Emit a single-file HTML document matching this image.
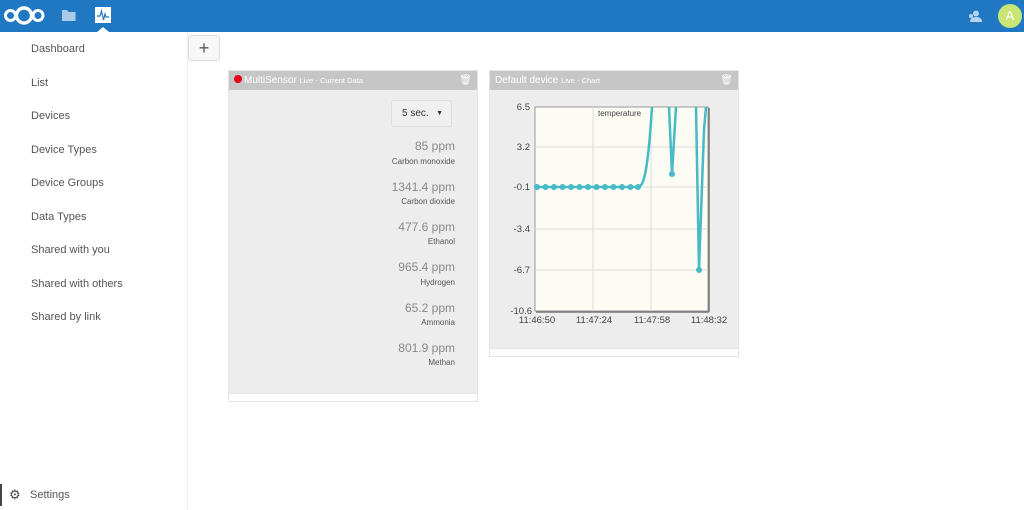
<!DOCTYPE html>
<html><head><style>
*{margin:0;padding:0;box-sizing:border-box}
body{width:1024px;height:510px;overflow:hidden;background:#fff;font-family:"Liberation Sans",sans-serif;position:relative}
#hdr{position:absolute;left:0;top:0;width:1024px;height:32px;background:#1f78c1}
#side{position:absolute;left:0;top:32px;width:188px;height:478px;border-right:1px solid #eee}
.nav{position:absolute;left:31px;font-size:11px;color:#555}
.card{position:absolute;background:#ededed;border:1px solid #e4e4e4}
.ch{height:19px;background:#c6c6c6;color:#fff;font-size:10px;padding:3px 5px;line-height:13px}
.ch small{font-size:7.5px}
.val{position:absolute;right:22px;text-align:right;color:#888;font-size:12px}
.lbl{position:absolute;right:22px;text-align:right;color:#555;font-size:8px}
.foot{position:absolute;left:0;right:0;bottom:0;height:8px;background:#fff;border-top:1px solid #e6e6e6}
</style></head><body>
<div id="hdr">
<svg width="120" height="32" style="position:absolute;left:0;top:0">
<circle cx="10.5" cy="15.5" r="5" fill="none" stroke="#fff" stroke-width="3"/>
<circle cx="24" cy="15.5" r="7.5" fill="none" stroke="#fff" stroke-width="3.4"/>
<circle cx="38" cy="15.5" r="5" fill="none" stroke="#fff" stroke-width="3"/>
<path d="M62 10h5l1.5 2h7v9h-13.5z" fill="#a9cbeb"/>
<rect x="95" y="7" width="16" height="16" fill="#fff"/>
<path d="M97 16h3l1.5-5 2 9 1.5-6 1 3h3" fill="none" stroke="#1f78c1" stroke-width="1.2"/>
<path d="M97 32l6-5 6 5z" fill="#fff"/>
</svg>
<svg width="14" height="12" style="position:absolute;left:968px;top:10px"><circle cx="8" cy="3.5" r="3" fill="#b6d2ee"/><path d="M2 12c0-4 3-5 6-5s6 1 6 5z" fill="#b6d2ee"/><circle cx="3" cy="6" r="2" fill="#b6d2ee"/></svg>
<div style="position:absolute;left:998px;top:4px;width:24px;height:24px;border-radius:50%;background:#c9e574;color:#fff;font-size:13px;text-align:center;line-height:24px">A</div>
</div>
<div id="side">
<div class="nav" style="top:11px">Dashboard</div>
<div class="nav" style="top:45px">List</div>
<div class="nav" style="top:78px">Devices</div>
<div class="nav" style="top:112px">Device Types</div>
<div class="nav" style="top:145px">Device Groups</div>
<div class="nav" style="top:179px">Data Types</div>
<div class="nav" style="top:212px">Shared with you</div>
<div class="nav" style="top:246px">Shared with others</div>
<div class="nav" style="top:279px">Shared by link</div>
<div style="position:absolute;left:0;top:452px;width:2px;height:22px;background:#444"></div>
<div style="position:absolute;left:9px;top:457px;font-size:13px;color:#444;line-height:12px">⚙</div>
<div class="nav" style="top:457px;left:30px">Settings</div>
</div>
<div style="position:absolute;left:188px;top:35px;width:32px;height:26px;border:1px solid #ddd;border-radius:3px;background:#f7f7f7;color:#555;font-size:18px;text-align:center;line-height:24px">+</div>

<div class="card" style="left:228px;top:70px;width:250px;height:332px">
<div class="ch"><span style="display:inline-block;width:8px;height:8px;border-radius:50%;background:#e3001b;margin-right:2px"></span>MultiSensor <small>Live - Current Data</small><span style="float:right">🗑</span></div>
<div style="position:absolute;left:162px;top:29px;width:61px;height:27px;border:1px solid #ddd;border-radius:3px;background:#f0f0f0;font-size:10px;color:#333;line-height:25px;padding-left:10px">5 sec. <span style="position:absolute;right:8px;font-size:7px">▼</span></div>
<div class="val" style="top:68px">85 ppm</div><div class="lbl" style="top:86px">Carbon monoxide</div>
<div class="val" style="top:109px">1341.4 ppm</div><div class="lbl" style="top:126px">Carbon dioxide</div>
<div class="val" style="top:149px">477.6 ppm</div><div class="lbl" style="top:166px">Ethanol</div>
<div class="val" style="top:189px">965.4 ppm</div><div class="lbl" style="top:207px">Hydrogen</div>
<div class="val" style="top:230px">65.2 ppm</div><div class="lbl" style="top:247px">Ammonia</div>
<div class="val" style="top:270px">801.9 ppm</div><div class="lbl" style="top:287px">Methan</div>
<div class="foot"></div>
</div>

<div class="card" style="left:489px;top:70px;width:250px;height:287px">
<div class="ch">Default device <small>Live - Chart</small><span style="float:right">🗑</span></div>
<div class="foot"></div>
</div>
<svg width="1024" height="510" style="position:absolute;left:0;top:0" font-family="Liberation Sans" font-size="9.5" fill="#444">
<rect x="535" y="107" width="173" height="204" fill="#fcfcf5" stroke="#999" stroke-width="1"/>
<g stroke="#ddd" stroke-width="1">
<line x1="535" y1="147" x2="708" y2="147"/><line x1="535" y1="187" x2="708" y2="187"/><line x1="535" y1="229" x2="708" y2="229"/><line x1="535" y1="270" x2="708" y2="270"/>
<line x1="593" y1="107" x2="593" y2="311"/><line x1="651" y1="107" x2="651" y2="311"/>
</g>
<line x1="536" y1="312" x2="709" y2="312" stroke="#777" stroke-width="1.5"/><line x1="709" y1="108" x2="709" y2="312" stroke="#777" stroke-width="1.5"/>
<text x="598" y="116" font-size="8">temperature</text>
<g text-anchor="end"><text x="530" y="110">6.5</text><text x="530" y="150">3.2</text><text x="530" y="190">-0.1</text><text x="530" y="232">-3.4</text><text x="530" y="273">-6.7</text><text x="532" y="314">-10.6</text></g>
<g text-anchor="middle"><text x="537" y="323">11:46:50</text><text x="594" y="323">11:47:24</text><text x="652" y="323">11:47:58</text><text x="709" y="323">11:48:32</text></g>
<path d="M536 187H638C644 187 648 170 652 107M669 107L672 174L676 107M696 107L699 270L704 130L706 107" fill="none" stroke="#47bac5" stroke-width="2.5"/>
<g fill="#47bac5"><circle cx="537" cy="187" r="3"/><circle cx="545.5" cy="187" r="3"/><circle cx="554" cy="187" r="3"/><circle cx="562.5" cy="187" r="3"/><circle cx="571" cy="187" r="3"/><circle cx="579.5" cy="187" r="3"/><circle cx="588" cy="187" r="3"/><circle cx="596.5" cy="187" r="3"/><circle cx="605" cy="187" r="3"/><circle cx="613.5" cy="187" r="3"/><circle cx="622" cy="187" r="3"/><circle cx="630.5" cy="187" r="3"/><circle cx="638" cy="187" r="3"/><circle cx="672" cy="174" r="3"/><circle cx="699" cy="270" r="3"/></g>
</svg>
</body></html>
